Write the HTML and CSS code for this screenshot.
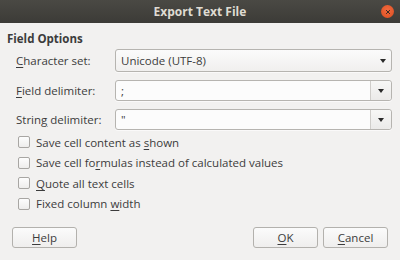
FILE: index.html
```html
<!DOCTYPE html>
<html>
<head>
<meta charset="utf-8">
<link rel="stylesheet" href="styles.css">
</head>
<body>
<div class="dialog">
  <div class="titlebar">
    <span class="title">Export Text File</span>
    <span class="close"><svg width="12" height="12" viewBox="0 0 12 12"><path d="M4 4 L8 8 M8 4 L4 8" stroke="#3a2a20" stroke-width="1.2" stroke-linecap="round"/></svg></span>
  </div>
  <div class="content">
    <div class="section">Field Options</div>
    <div class="form">
      <label class="lbl"><u>C</u>haracter set:</label>
      <div class="combo">
        <span class="val">Unicode (UTF-8)</span>
        <span class="arrow"></span>
      </div>
      <label class="lbl"><u>F</u>ield delimiter:</label>
      <div class="combo entry">
        <span class="val">;</span>
        <span class="btn"><span class="arrow"></span></span>
      </div>
      <label class="lbl">Strin<u>g</u> delimiter:</label>
      <div class="combo entry">
        <span class="val">"</span>
        <span class="btn"><span class="arrow"></span></span>
      </div>
    </div>
    <div class="checks">
      <div class="check"><span class="box"></span><span>Save cell content as <u>s</u>hown</span></div>
      <div class="check"><span class="box"></span><span>Save cell fo<u>r</u>mulas instead of calculated values</span></div>
      <div class="check"><span class="box"></span><span><u>Q</u>uote all text cells</span></div>
      <div class="check"><span class="box"></span><span>Fixed column <u>w</u>idth</span></div>
    </div>
    <div class="buttons">
      <button class="pb"><u>H</u>elp</button>
      <span class="spacer"></span>
      <button class="pb"><u>O</u>K</button>
      <button class="pb"><u>C</u>ancel</button>
    </div>
  </div>
</div>
</body>
</html>
```
FILE: styles.css
```css
html, body {
  margin: 0;
  padding: 0;
  width: 400px;
  height: 260px;
  overflow: hidden;
  background: #f2f1f0;
}
.dialog {
  font-family: "Open Sans", "DejaVu Sans", sans-serif;
  font-size: 11.5px;
  color: #3c3c3c;
  width: 400px;
  height: 260px;
  display: flex;
  flex-direction: column;
}
.titlebar {
  height: 23px;
  flex: none;
  background: linear-gradient(#4a4944, #3c3b37);
  display: flex;
  align-items: center;
  justify-content: center;
  position: relative;
}
.title {
  color: #dfdbd2;
  font-weight: bold;
  font-size: 12px;
}
.close {
  position: absolute;
  right: 6px;
  top: 5px;
  width: 13px;
  height: 13px;
  border-radius: 50%;
  background: radial-gradient(circle at 50% 40%, #f26a40, #d94d1e);
  display: flex;
  align-items: center;
  justify-content: center;
}
.close svg { width: 10px; height: 10px; }
.content {
  flex: 1;
  display: flex;
  flex-direction: column;
  padding: 7px 8px 0 7px;
}
.section {
  font-weight: bold;
  line-height: 14px;
  padding-top: 2px;
}
.form {
  display: grid;
  grid-template-columns: 108px 1fr;
  row-gap: 8px;
  margin-top: 3px;
  align-items: center;
}
.lbl {
  padding-left: 9px;
}
u {
  text-decoration-thickness: 1px;
  text-underline-offset: 2px;
}
.combo {
  height: 21px;
  border: 1px solid #b6b4b0;
  border-radius: 3px;
  background: linear-gradient(#fbfbfb, #f0efee);
  display: flex;
  align-items: center;
  box-sizing: border-box;
  padding-left: 5px;
  box-shadow: 0 1px 0 rgba(255,255,255,0.6);
}
.combo:first-of-type { height: 23px; }
.combo .val { flex: 1; }
.combo > .arrow { margin-right: 5px; }
.combo.entry {
  background: #fcfcfc;
  padding-left: 0;
}
.combo.entry .val {
  padding-left: 5px;
  height: 100%;
  display: flex;
  align-items: center;
}
.btn {
  width: 20px;
  height: 100%;
  border-left: 1px solid #cfcdca;
  background: linear-gradient(#f7f7f6, #ebeae9);
  display: flex;
  align-items: center;
  justify-content: center;
  border-radius: 0 3px 3px 0;
}
.arrow {
  width: 0;
  height: 0;
  border-left: 3.5px solid transparent;
  border-right: 3.5px solid transparent;
  border-top: 4px solid #2a2a2a;
}
.checks {
  margin-top: 2px;
  display: flex;
  flex-direction: column;
}
.check {
  height: 20.5px;
  display: flex;
  align-items: center;
  padding-left: 11px;
}
.box {
  width: 10px;
  height: 10px;
  border: 1px solid #a8a6a3;
  border-radius: 2px;
  background: linear-gradient(#fdfdfd, #eeedec);
  margin-right: 6px;
  flex: none;
}
.buttons {
  margin-top: auto;
  margin-bottom: 12px;
  display: flex;
  gap: 5px;
  padding-left: 5px;
  padding-right: 4px;
}
.spacer { flex: 1; }
.pb {
  width: 65px;
  height: 21px;
  font-family: inherit;
  font-size: inherit;
  color: #3c3c3c;
  border: 1px solid #b3b1ad;
  border-radius: 3px;
  background: linear-gradient(#fbfbfb, #efeeed);
  padding: 0;
}
```
